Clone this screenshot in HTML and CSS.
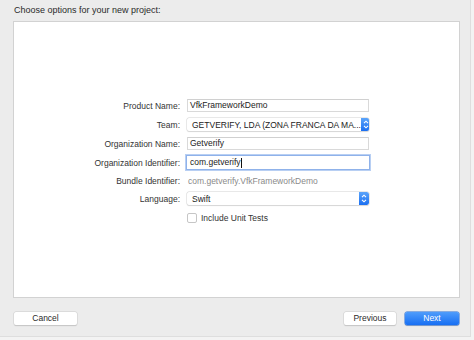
FILE: index.html
```html
<!DOCTYPE html>
<html>
<head>
<meta charset="utf-8">
<link rel="stylesheet" href="styles.css">
</head>
<body>
<div class="window">
  <div class="title">Choose options for your new project:</div>
  <div class="panel">
    <div class="form">
      <div class="label">Product Name:</div>
      <div class="cell"><div class="field">VfkFrameworkDemo</div></div>

      <div class="label">Team:</div>
      <div class="cell"><div class="popup"><span class="ptext">GETVERIFY, LDA (ZONA FRANCA DA MA...</span><span class="stepper"><svg width="6" height="9" viewBox="0 0 6 9"><path d="M1 3.2 L3 1.2 L5 3.2 M1 5.8 L3 7.8 L5 5.8" fill="none" stroke="#fff" stroke-width="1.1"/></svg></span></div></div>

      <div class="label">Organization Name:</div>
      <div class="cell"><div class="field">Getverify</div></div>

      <div class="label">Organization Identifier:</div>
      <div class="cell"><div class="field focus">com.getverify<span class="caret"></span></div></div>

      <div class="label">Bundle Identifier:</div>
      <div class="cell"><div class="static">com.getverify.VfkFrameworkDemo</div></div>

      <div class="label">Language:</div>
      <div class="cell"><div class="popup"><span class="ptext">Swift</span><span class="stepper"><svg width="6" height="9" viewBox="0 0 6 9"><path d="M1 3.2 L3 1.2 L5 3.2 M1 5.8 L3 7.8 L5 5.8" fill="none" stroke="#fff" stroke-width="1.1"/></svg></span></div></div>

      <div class="label"></div>
      <div class="cell"><label class="check"><span class="box"></span>Include Unit Tests</label></div>
    </div>
  </div>
  <div class="buttons">
    <button class="btn cancel">Cancel</button>
    <div class="right">
      <button class="btn prev">Previous</button>
      <button class="btn next">Next</button>
    </div>
  </div>
</div>
</body>
</html>
```
FILE: styles.css
```css
html, body {
  margin: 0;
  padding: 0;
  background: #f3f3f3;
}
body {
  width: 474px;
  height: 340px;
  overflow: hidden;
  font-family: "Liberation Sans", Arial, sans-serif;
  color: #262626;
}
.window {
  width: 471px;
  height: 337px;
  background: #ececec;
  border-right: 1px solid #dedede;
  border-bottom: 1px solid #dedede;
  box-sizing: border-box;
  display: flex;
  flex-direction: column;
}
.title {
  font-size: 9px;
  line-height: 12px;
  padding: 4px 0 0 14px;
  height: 12px;
  color: #2a2a2a;
}
.panel {
  margin: 5px 0 0 13px;
  width: 447px;
  height: 277px;
  box-sizing: border-box;
  background: #fff;
  border: 1px solid #d2d2d2;
  padding-top: 74px;
}
.form {
  display: grid;
  grid-template-columns: 166px 183px;
  grid-template-rows: 19px 19px 19px 19px 17px 19px 19px;
  column-gap: 7px;
}
.label {
  font-size: 8.5px;
  text-align: right;
  align-self: center;
  color: #333;
}
.cell {
  display: flex;
  align-items: center;
}
.field {
  width: 182px;
  height: 13px;
  box-sizing: border-box;
  border: 1px solid #d9d9d9;
  border-top-color: #d0d0d0;
  font-size: 8.5px;
  line-height: 11px;
  padding-left: 2px;
  color: #222;
  background: #fff;
  display: flex;
  align-items: center;
}
.field.focus {
  width: 184px;
  height: 15px;
  margin-left: -1px;
  border: 1px solid #8fb2ea;
  box-shadow: 0 0 0 1px #b8cff3;
  padding-left: 3px;
}
.caret {
  display: inline-block;
  width: 1px;
  height: 10px;
  background: #111;
}
.static {
  font-size: 8.5px;
  color: #8a8a8a;
  padding-left: 1px;
}
.popup {
  width: 182px;
  height: 13px;
  box-sizing: border-box;
  background: #fff;
  border-radius: 2px;
  box-shadow: 0 0 0 0.5px #d3d3d3, 0 0.5px 1px rgba(0,0,0,0.15);
  display: flex;
  align-items: center;
  justify-content: space-between;
  font-size: 8.5px;
  color: #222;
  overflow: hidden;
}
.ptext {
  padding-left: 5px;
  white-space: nowrap;
}
.stepper {
  flex: none;
  width: 10px;
  height: 13px;
  border-radius: 0 2px 2px 0;
  background: linear-gradient(#5ba4fa, #1b6ff1);
  display: flex;
  align-items: center;
  justify-content: center;
}
.check {
  display: flex;
  align-items: center;
  font-size: 8.5px;
  color: #333;
}
.box {
  width: 8px;
  height: 8px;
  border: 1px solid #c6c6c6;
  border-radius: 2px;
  background: #fff;
  margin-right: 4px;
}
.buttons {
  display: flex;
  justify-content: space-between;
  padding: 14px 11px 0 14px;
}
.right {
  display: flex;
  gap: 9px;
}
.btn {
  height: 13px;
  padding: 0;
  border: none;
  border-radius: 2px;
  font-family: "Liberation Sans", Arial, sans-serif;
  font-size: 8.5px;
  line-height: 13px;
  background: #fff;
  color: #2a2a2a;
  box-shadow: 0 0 0 0.5px #cfcfcf, 0 0.5px 1px rgba(0,0,0,0.2);
}
.cancel { width: 63px; }
.prev { width: 52px; }
.next {
  width: 54px;
  color: #fff;
  background: linear-gradient(#4f9cfb, #176ff3);
  box-shadow: 0 0 0 0.5px #2a70d8, 0 0.5px 1px rgba(0,0,0,0.2);
}
```
